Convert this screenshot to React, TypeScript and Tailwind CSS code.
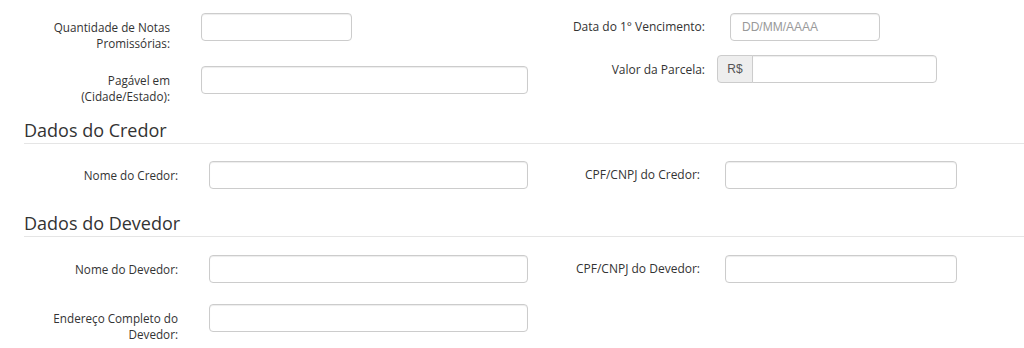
const labelCls = "shrink-0 text-right leading-[16px] pt-[6px] text-[#333]"
const inputCls =
  "h-[28px] rounded-[4px] border border-[#ccc] bg-white px-[11px] text-[12px] text-[#555] outline-none placeholder:text-[#999] shadow-[inset_0_1px_1px_rgba(0,0,0,0.075)]"

function Field({
  label,
  labelW,
  gap,
  inputW,
  placeholder,
  size = "text-[12px]",
}: {
  label: React.ReactNode
  labelW: string
  gap: string
  inputW: string
  placeholder?: string
  size?: string
}) {
  return (
    <div className="flex items-start">
      <label className={`${labelCls} ${size} ${labelW}`}>{label}</label>
      <input
        className={`${inputCls} ${gap} ${inputW}`}
        style={{ fontFamily: '"Liberation Sans", Arial, sans-serif' }}
        placeholder={placeholder}
      />
    </div>
  )
}

function Heading({ children, top }: { children: string; top: string }) {
  return (
    <h2
      className={`${top} ml-[24px] border-b border-[#e5e5e5] pb-[1px] text-[18px] leading-[24px] text-[#333]`}
    >
      {children}
    </h2>
  )
}

export default function App() {
  return (
    <div
      className="h-[348px] w-[1024px] overflow-hidden bg-white"
      style={{ fontFamily: '"Open Sans", "Noto Sans", sans-serif' }}
    >
      <div className="flex items-start pt-[13px]">
        <div className="flex w-[540px] shrink-0 flex-col gap-[15px]">
          <Field
            label={<>Quantidade de Notas<br />Promissórias:</>}
            labelW="w-[170px]"
            gap="ml-[31px]"
            inputW="w-[151px]"
            size="text-[11.7px]"
          />
          <Field
            label={<>Pagável em<br />(Cidade/Estado):</>}
            labelW="w-[170px]"
            gap="ml-[31px]"
            inputW="w-[327px]"
            size="text-[11.7px]"
          />
        </div>
        <div className="flex flex-col gap-[14px]">
          <Field
            label="Data do 1° Vencimento:"
            labelW="w-[165px]"
            gap="ml-[25px]"
            inputW="w-[150px]"
            placeholder="DD/MM/AAAA"
          />
          <div className="flex items-start">
            <label className={`${labelCls} text-[12px] w-[165px] pt-[7px]`}>Valor da Parcela:</label>
            <div className="ml-[12px] flex h-[28px] w-[220px]">
              <span
                className="flex w-[36px] items-center justify-center rounded-l-[4px] border border-[#ccc] bg-[#eee] text-[12px] text-[#555]"
                style={{ fontFamily: '"Liberation Sans", Arial, sans-serif' }}
              >
                R$
              </span>
              <input className={`${inputCls} -ml-px flex-1 rounded-l-none`} />
            </div>
          </div>
        </div>
      </div>

      <Heading top="mt-[14px]">Dados do Credor</Heading>
      <div className="mt-[17px] flex items-start">
        <div className="w-[540px] shrink-0">
          <Field
            label="Nome do Credor:"
            labelW="w-[178px]"
            gap="ml-[31px]"
            inputW="w-[319px]"
            size="text-[11.7px]"
          />
        </div>
        <Field label="CPF/CNPJ do Credor:" labelW="w-[160px]" gap="ml-[25px]" inputW="w-[232px]" />
      </div>

      <Heading top="mt-[22px]">Dados do Devedor</Heading>
      <div className="mt-[18px] flex items-start">
        <div className="flex w-[540px] shrink-0 flex-col gap-[21px]">
          <Field
            label="Nome do Devedor:"
            labelW="w-[178px]"
            gap="ml-[31px]"
            inputW="w-[319px]"
            size="text-[11.7px]"
          />
          <Field
            label={<>Endereço Completo do<br />Devedor:</>}
            labelW="w-[178px]"
            gap="ml-[31px]"
            inputW="w-[319px]"
            size="text-[11.7px]"
          />
        </div>
        <Field label="CPF/CNPJ do Devedor:" labelW="w-[160px]" gap="ml-[25px]" inputW="w-[232px]" />
      </div>
    </div>
  )
}
